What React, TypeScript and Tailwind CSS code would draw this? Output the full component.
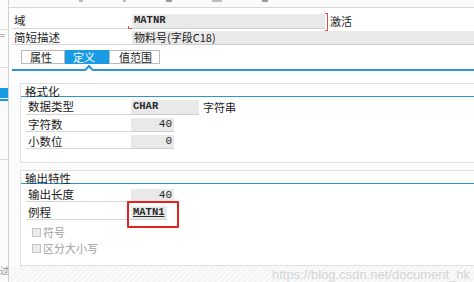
const cjk = "font-['Noto_Sans_CJK_SC',sans-serif]";
const mono = "font-['Liberation_Mono','Noto_Sans_CJK_SC',monospace]";

const Label = ({ text, w = "w-[105px]" }: { text: string; w?: string }) => (
  <div className={`${w} h-full flex items-center border-b border-[#d6d6d6] pl-[2px] text-[11.5px] text-[#1b1b1b] leading-none`}>
    {text}
  </div>
);

const Field = ({
  value,
  className = "",
  right = false,
}: {
  value: string;
  className?: string;
  right?: boolean;
}) => (
  <div
    className={`h-full flex items-center bg-[#e9e9e9] border-b border-[#cfcfcf] px-[2px] ${
      right ? "justify-end" : ""
    } ${className}`}
  >
    {value}
  </div>
);

const GroupTitle = ({ text }: { text: string }) => (
  <div className="h-[12px] border-b-[1.5px] border-[#2d95d6] flex items-end pl-[4px]">
    <span className="text-[11.5px] leading-none text-[#1b1b1b] -mb-[1px]">{text}</span>
  </div>
);

const Check = ({ text }: { text: string }) => (
  <div className="flex items-center gap-[2px] h-[16px] pl-[6px] text-[11px] text-[#a0a0a0]">
    <span className="w-[9px] h-[9px] border border-[#c4c4c4] bg-[#ececec]" />
    <span>{text}</span>
  </div>
);

export default function App() {
  return (
    <div className={`w-[474px] h-[282px] overflow-hidden flex bg-white ${cjk}`}>
      {/* left strip */}
      <div className="w-[9px] shrink-0 flex flex-col border-r border-[#d2d2d2] bg-[#fbfbfb]">
        <div className="h-[30px] border-b border-[#dcdcdc]" />
        <div className="h-[38px] border-b border-[#dcdcdc] flex items-start pt-[1px]">
          <span className="text-[9px] text-[#777] leading-none">=</span>
        </div>
        <div className="h-[20px]" />
        <div className="h-[10px] bg-[#1a9be6]" />
        <div className="h-[2px] mt-[1px] bg-[#1a9be6]" />
        <div className="h-[59px] border-b border-[#dcdcdc]" />
        <div className="flex-1" />
        <div className="h-[14px] text-[9px] text-[#888] leading-none">过</div>
        <div className="h-[2px]" />
      </div>

      {/* main */}
      <div className="flex-1 flex flex-col min-w-0 relative">
        {/* toolbar remnant */}
        <div className="h-[8px] border-b border-[#d8d8d8] bg-[#fafafa] flex items-start gap-[40px] pl-[70px]">
          <span className="w-[4px] h-[2px] bg-[#bbb]" />
          <span className="w-[3px] h-[2px] bg-[#bbb]" />
          <span className="w-[6px] h-[2px] bg-[#999]" />
          <span className="w-[10px] h-[2px] bg-[#bbb]" />
          <span className="w-[6px] h-[2px] bg-[#999]" />
        </div>

        {/* 域 */}
        <div className="mt-[6px] h-[15px] flex items-stretch ml-[3px]">
          <Label text="域" w="w-[118px]" />
          <div className="relative w-[2px]">
            <span className="absolute -left-[2px] bottom-[0px] w-[4px] h-[3px] border-l border-b border-[#e04b4b]" />
          </div>
          <Field
            value="MATNR"
            className={`w-[193px] ${mono} text-[10.5px] font-bold text-[#2a2a2a]`}
          />
          <span className="w-[3px] h-[18px] -mt-[1px] border-y border-r border-[#e04b4b]" />
          <span className="pl-[2px] text-[11px] leading-[15px] text-[#1b1b1b]">激活</span>
        </div>

        {/* 简短描述 */}
        <div className="mt-[2px] h-[14px] flex items-stretch ml-[3px]">
          <Label text="简短描述" w="w-[120px]" />
          <Field value="物料号(字段C18)" className="flex-1 text-[11px] text-[#1b1b1b]" />
        </div>

        {/* tabs */}
        <div className="mt-[5px] ml-[12px] flex h-[14px] text-[11px] leading-none">
          <div className="w-[44px] border border-[#b9b9b9] bg-white flex items-center pl-[8px] text-[#222]">
            属性
          </div>
          <div className="w-[44px] bg-[#1a9be6] flex items-center pl-[8px] text-white">定义</div>
          <div className="w-[51px] border border-[#b9b9b9] bg-white flex items-center pl-[9px] text-[#222]">
            值范围
          </div>
        </div>
        <div className="mt-[5px] ml-[3px] h-[2px] bg-[#2d95d6] relative">
          <span className="absolute left-[74px] -top-[3px] w-[6px] h-[6px] rotate-45 bg-white border-l-2 border-t-2 border-[#2d95d6]" />
        </div>

        <div className="flex-1 flex flex-col bg-[#fcfcfc] mt-[12px]">
          {/* 格式化 */}
          <div className="ml-[11px] h-[80px] border border-[#e0e0e0] bg-white pt-[1px] -mr-[4px]">
            <GroupTitle text="格式化" />
            <div className="flex flex-col gap-[3px] mt-[3px] ml-[5px]">
              <div className="h-[15px] flex items-stretch">
                <Label text="数据类型" />
                <Field value="CHAR" className={`w-[68px] ${mono} text-[10.5px] font-bold text-[#2a2a2a]`} />
                <span className="pl-[4px] text-[11px] leading-[15px] text-[#1b1b1b]">字符串</span>
              </div>
              <div className="h-[14px] flex items-stretch">
                <Label text="字符数" />
                <Field value="40" right className={`w-[43px] ${mono} text-[11px] text-[#2a2a2a]`} />
              </div>
              <div className="h-[14px] flex items-stretch">
                <Label text="小数位" />
                <Field value="0" right className={`w-[43px] ${mono} text-[11px] text-[#2a2a2a]`} />
              </div>
            </div>
          </div>

          {/* 输出特性 */}
          <div className="mt-[7px] ml-[11px] h-[96px] border border-[#e0e0e0] bg-white pt-[1px] -mr-[4px]">
            <GroupTitle text="输出特性" />
            <div className="flex flex-col mt-[5px] ml-[5px]">
              <div className="h-[13px] flex items-stretch">
                <Label text="输出长度" />
                <Field value="40" right className={`w-[43px] ${mono} text-[11px] text-[#2a2a2a]`} />
              </div>
              <div className="h-[14px] mt-[4px] flex items-stretch">
                <Label text="例程" />
                <div className="relative">
                  <Field
                    value="MATN1"
                    className={`w-[36px] ${mono} text-[10.5px] font-bold underline text-[#2a2a2a]`}
                  />
                  <span className="absolute -left-[4px] -top-[5px] w-[52px] h-[27px] border-2 border-[#e3231f] rounded-[1px]" />
                </div>
              </div>
              <div className="mt-[4px]">
                <Check text="符号" />
                <Check text="区分大小写" />
              </div>
            </div>
          </div>

          {/* hatched footer */}
          <div className="flex-1 bg-[repeating-linear-gradient(135deg,#f3f4f6_0px,#f3f4f6_2px,#fbfbfc_2px,#fbfbfc_4px)] flex items-center justify-end pr-[4px]">
            <span className="font-['Liberation_Sans',sans-serif] text-[13px] text-[#d4d4d4] leading-none">
              https://blog.csdn.net/document_hk
            </span>
          </div>
        </div>
      </div>
    </div>
  );
}
